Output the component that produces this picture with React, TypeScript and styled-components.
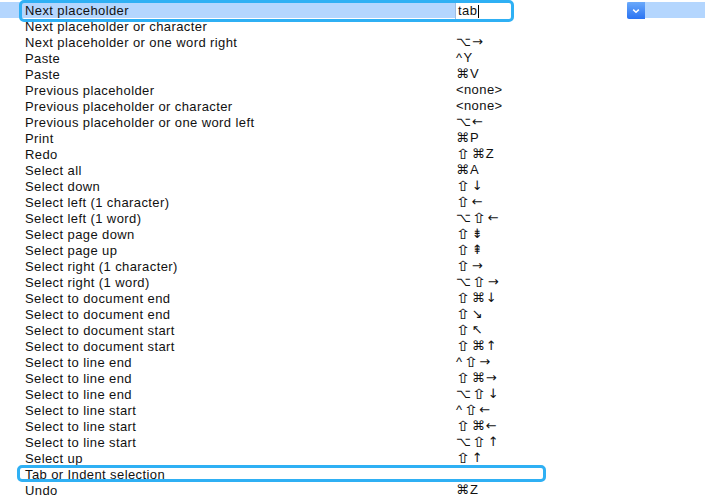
import React from "react";
import styled, { createGlobalStyle } from "styled-components";

const Global = createGlobalStyle`
  html, body { margin: 0; padding: 0; background: #ffffff; }
  body {
    font-family: "Liberation Sans", Arial, sans-serif;
    font-size: 13px;
    letter-spacing: 0.4px;
    color: #111111;
    -webkit-font-smoothing: antialiased;
  }
`;

const List = styled.div`
  padding-top: 2px;
  width: 705px;
  overflow: hidden;
`;

const Row = styled.div<{ $ring?: boolean }>`
  position: relative;
  display: grid;
  grid-template-columns: 456px 1fr;
  height: 16px;
  box-sizing: border-box;
  padding-top: 1px;
  line-height: 16px;
  white-space: nowrap;
  ${(p) =>
    p.$ring
      ? `
    &::after {
      content: "";
      position: absolute;
      left: 17px;
      width: 529px;
      top: -1px;
      height: 17px;
      box-sizing: border-box;
      border: 3px solid #2fb0f4;
      border-radius: 5px;
      pointer-events: none;
    }
  `
      : ""}
`;

const Name = styled.span`
  padding-left: 25px;
`;

const Keys = styled.span`
  display: flex;
  align-items: center;
  height: 15px;
  margin-top: -1px;
`;

const Sym = styled.span<{ $shift?: boolean }>`
  display: inline-block;
  font-family: "DejaVu Sans", sans-serif;
  font-size: 13px;
  line-height: 14px;
  letter-spacing: 0;
  margin-right: 1px;
  ${(p) =>
    p.$shift
      ? "font-size: 14px; transform: scale(1.3, 1); margin: 0 3px 0 1px;"
      : ""}
`;

const Chr = styled.span`
  margin-right: 1px;
`;

const SelectedRow = styled.div`
  display: grid;
  grid-template-columns: 19px 495px 113px 18px 1fr;
  height: 16px;
  line-height: 16px;
  background: #b4d6fe;
  white-space: nowrap;
`;

const EditCell = styled.div`
  position: relative;
  display: flex;
  align-items: stretch;
  &::after {
    content: "";
    position: absolute;
    left: 0;
    right: 0;
    top: -2px;
    bottom: -3px;
    box-sizing: border-box;
    border: 3px solid #2fb0f4;
    border-radius: 5px;
    pointer-events: none;
  }
`;

const EditName = styled.span`
  width: 436px;
  padding-left: 6px;
  padding-top: 1px;
  box-sizing: border-box;
`;

const Field = styled.span`
  flex: 1;
  background: #ffffff;
  border-left: 1px solid #9fbde3;
  padding-left: 2px;
  padding-top: 1px;
  display: flex;
  align-items: center;
`;

const Caret = styled.span`
  display: inline-block;
  width: 1px;
  height: 13px;
  background: #000;
  margin-left: 1px;
`;

const BlankCell = styled.div`
  background: #ffffff;
`;

const PopButton = styled.div`
  background: linear-gradient(#6aa9fb, #2a73f2);
  display: flex;
  align-items: center;
  justify-content: center;
  border-radius: 2px 0 0 2px;
`;

const rows: [string, string, boolean?][] = [
  ["Next placeholder or character", ""],
  ["Next placeholder or one word right", "⌥→"],
  ["Paste", "^Y"],
  ["Paste", "⌘V"],
  ["Previous placeholder", "<none>"],
  ["Previous placeholder or character", "<none>"],
  ["Previous placeholder or one word left", "⌥←"],
  ["Print", "⌘P"],
  ["Redo", "⇧⌘Z"],
  ["Select all", "⌘A"],
  ["Select down", "⇧↓"],
  ["Select left (1 character)", "⇧←"],
  ["Select left (1 word)", "⌥⇧←"],
  ["Select page down", "⇧⇟"],
  ["Select page up", "⇧⇞"],
  ["Select right (1 character)", "⇧→"],
  ["Select right (1 word)", "⌥⇧→"],
  ["Select to document end", "⇧⌘↓"],
  ["Select to document end", "⇧↘"],
  ["Select to document start", "⇧↖"],
  ["Select to document start", "⇧⌘↑"],
  ["Select to line end", "^⇧→"],
  ["Select to line end", "⇧⌘→"],
  ["Select to line end", "⌥⇧↓"],
  ["Select to line start", "^⇧←"],
  ["Select to line start", "⇧⌘←"],
  ["Select to line start", "⌥⇧↑"],
  ["Select up", "⇧↑"],
  ["Tab or Indent selection", "", true],
  ["Undo", "⌘Z"],
];

function KeyCombo({ keys }: { keys: string }) {
  if (keys.startsWith("<")) return <Keys>{keys}</Keys>;
  return (
    <Keys>
      {Array.from(keys).map((c, i) =>
        c.charCodeAt(0) > 127 ? (
          <Sym key={i} $shift={c === "⇧"}>
            {c}
          </Sym>
        ) : (
          <Chr key={i}>{c}</Chr>
        )
      )}
    </Keys>
  );
}

export default function App() {
  return (
    <>
      <Global />
      <List>
        <SelectedRow>
          <span />
          <EditCell>
            <EditName>Next placeholder</EditName>
            <Field>
              tab
              <Caret />
            </Field>
          </EditCell>
          <BlankCell />
          <PopButton>
            <svg width="8" height="6" viewBox="0 0 8 6">
              <path d="M1.2 1.6 L4 4.2 L6.8 1.6" fill="none" stroke="#fff" strokeWidth="1.5" />
            </svg>
          </PopButton>
          <span />
        </SelectedRow>
        {rows.map(([name, keys, ring], i) => (
          <Row key={i} $ring={ring}>
            <Name>{name}</Name>
            <KeyCombo keys={keys} />
          </Row>
        ))}
      </List>
    </>
  );
}
